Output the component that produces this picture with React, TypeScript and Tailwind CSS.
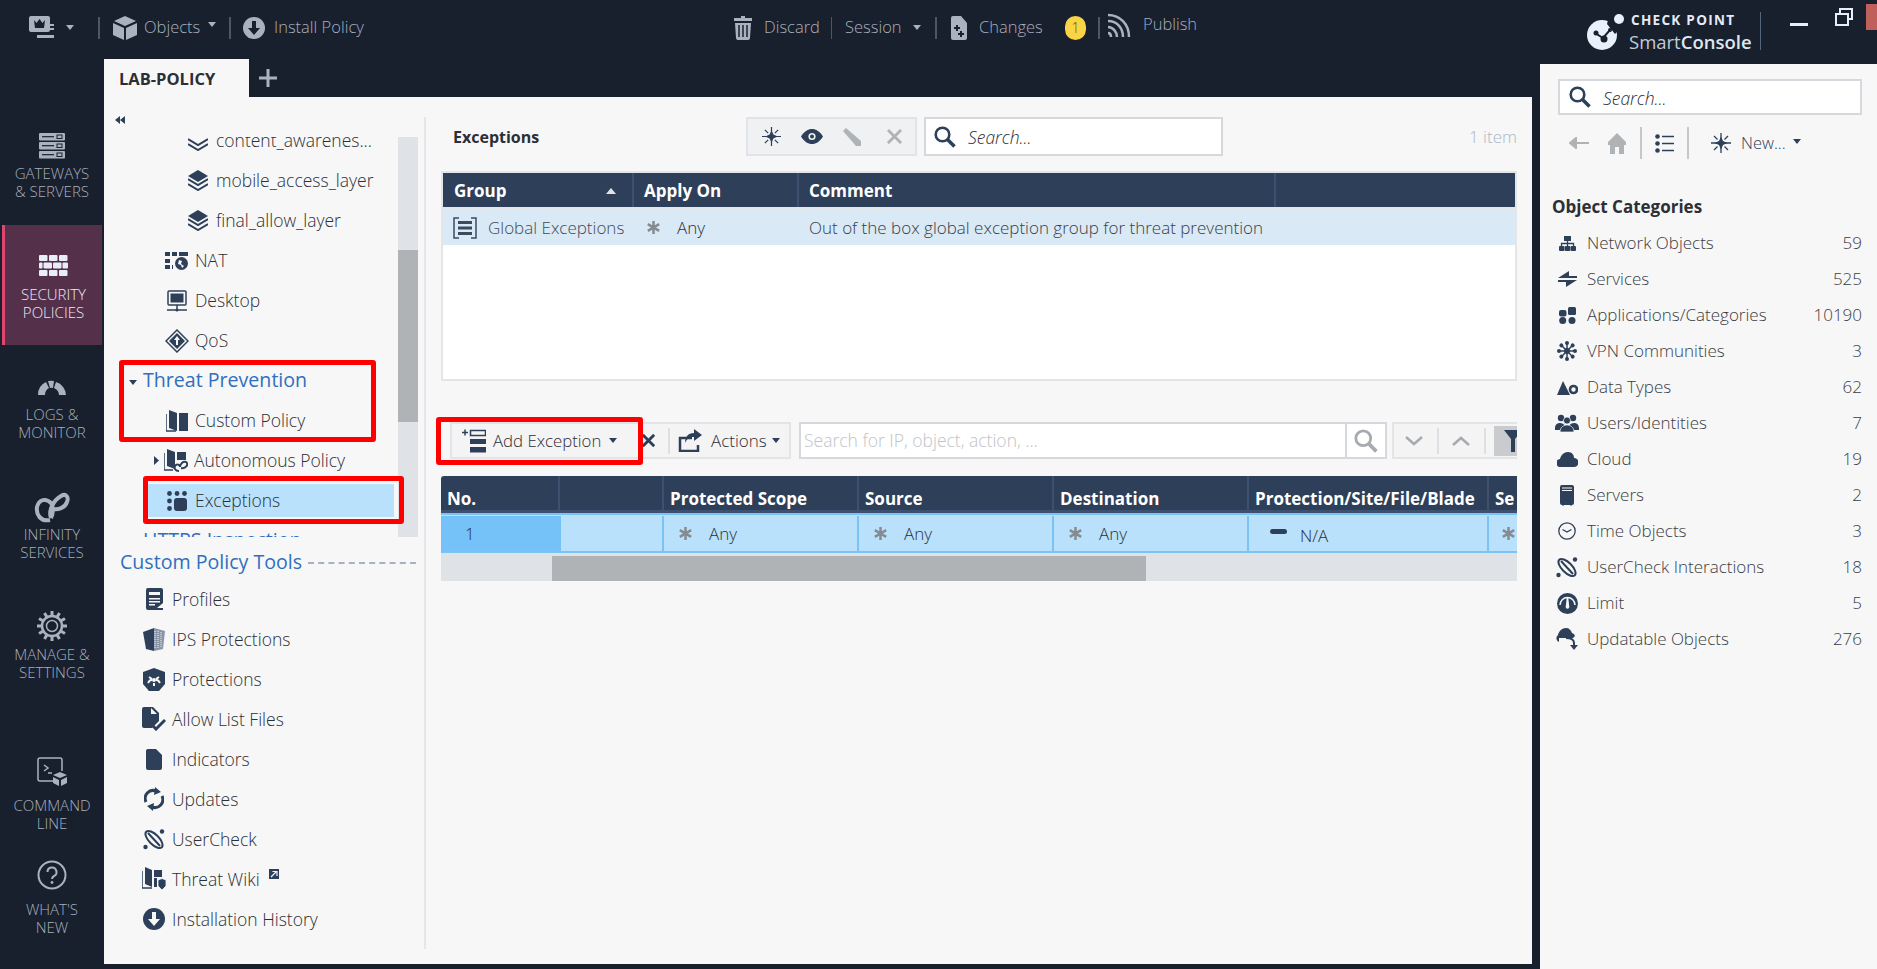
import React from "react";

const N = "#2e4059";
const G = "#aab2c0";

const Svg = ({ w, h, vb, children, cls }: { w: number; h: number; vb?: string; children: React.ReactNode; cls?: string }) => (
  <svg width={w} height={h} viewBox={vb ?? `0 0 ${w} ${h}`} className={"shrink-0 " + (cls ?? "")}>{children}</svg>
);

const Caret = ({ c = G, w = 8, cls = "" }: { c?: string; w?: number; cls?: string }) => (
  <Svg w={w} h={5} vb="0 0 8 5" cls={cls}><path d="M0 0h8L4 5z" fill={c} /></Svg>
);

const Sep = ({ cls }: { cls: string }) => <div className={"w-[2px] shrink-0 " + cls} />;

// top bar icons
const AppMenuIcon = () => (
  <Svg w={25} h={23}>
    <path d="M2 0h17a2 2 0 0 1 2 2v12a2 2 0 0 1-2 2H2a2 2 0 0 1-2-2V2a2 2 0 0 1 2-2z" fill={G} />
    <path d="M5 4l2.500 3L10.500 3l3 4L16 4l-1 8H6z" fill="#181f2d" />
    <path d="M18 8h7v2h-7zM18 12h7v2h-7zM8 19h17v3H8z" fill={G} />
  </Svg>
);
const CubeIcon = ({ s = 24, c = G }: { s?: number; c?: string }) => (
  <Svg w={s} h={s} vb="0 0 24 24">
    <path d="M12 0l11 5-11 5L1 5z" fill={c} />
    <path d="M0 7l11 5v12L0 19zM24 7l-11 5v12l11-5z" fill={c} />
  </Svg>
);
const DownCircle = ({ s = 22, c = G, bg = "#181f2d" }: { s?: number; c?: string; bg?: string }) => (
  <Svg w={s} h={s} vb="0 0 22 22">
    <circle cx="11" cy="11" r="11" fill={c} />
    <path d="M9 4h4v7h4l-6 7-6-7h4z" fill={bg} />
  </Svg>
);
const Trash = () => (
  <Svg w={20} h={24}>
    <path d="M8 0h4v2h7v3H1V2h7zM2 7h16l-1 15a2 2 0 0 1-2 2H5a2 2 0 0 1-2-2z" fill={G} />
    <path d="M6 9v12M10 9v12M14 9v12" stroke="#181f2d" strokeWidth="1.500" />
  </Svg>
);
const ChangesIcon = () => (
  <Svg w={16} h={24}>
    <path d="M2 0h8l6 7v15a2 2 0 0 1-2 2H2a2 2 0 0 1-2-2V2a2 2 0 0 1 2-2z" fill={G} />
    <path d="M5 9h2v2h2v2H7v2H5v-2H3v-2h2zM9 15h2v2h2v2h-2v2H9v-2H7v-2h2z" fill="#181f2d" />
  </Svg>
);
const PublishIcon = () => (
  <Svg w={25} h={25}>
    <path d="M1 2c12 0 21 9 21 22M1 8c9 0 15 7 15 16M1 14c5 0 9 5 9 10" stroke={G} strokeWidth="2.500" fill="none" />
    <path d="M1 20c2 0 3 2 3 4" stroke={G} strokeWidth="2.500" fill="none" />
  </Svg>
);

// sidebar icons
const GatewayIcon = () => (
  <Svg w={26} h={26}>
    {[0, 9, 18].map((y) => (
      <g key={y}>
        <rect x="0" y={y} width="26" height="7.500" rx="1" fill={G} />
        <path d={`M3 ${y + 3.7}h12`} stroke="#181f2d" strokeWidth="1.200" />
        <rect x="18" y={y + 2} width="5" height="3.500" fill="none" stroke="#181f2d" strokeWidth="1" />
      </g>
    ))}
  </Svg>
);
const WallIcon = () => (
  <Svg w={29} h={21}>
    {[0, 7.500, 15].map((y, i) => (
      <g key={y}>
        {(i === 1 ? [0, 4.500, 14, 23.500] : [0, 10, 20]).map((x, k) => (
          <rect key={x} x={x} y={y} width={i === 1 && (k === 0 || k === 3) ? (k === 0 ? 3.500 : 5.500) : 8.500} height="6" rx="1" fill="#e8edf7" />
        ))}
      </g>
    ))}
  </Svg>
);
const GaugeIcon = () => (
  <Svg w={32} h={18}>
    <path d="M2 17A14 14 0 0 1 10 4L13 10A8 8 0 0 0 9 17zM12 3a14 14 0 0 1 6 0l-1 7a8 8 0 0 0-3 0zM20 4A14 14 0 0 1 30 17h-7a8 8 0 0 0-5-7z" fill={G} />
  </Svg>
);
const InfinityIcon = () => (
  <Svg w={36} h={31}>
    <path d="M16 28C6 30 2 22 3 15 5 7 12 6 17 11c3 4 2 11 0 15M17 26C14 18 20 8 27 4c5-3 8 1 6 6-2 6-9 8-14 7" stroke={G} strokeWidth="4" fill="none" />
  </Svg>
);
const GearIcon = () => (
  <Svg w={30} h={30} vb="0 0 30 30">
    {Array.from({ length: 12 }).map((_, i) => (
      <rect key={i} x="13.500" y="0" width="3" height="5" fill={G} transform={`rotate(${i * 30} 15 15)`} />
    ))}
    <circle cx="15" cy="15" r="10" fill="none" stroke={G} strokeWidth="2.500" />
    <circle cx="15" cy="15" r="5.500" fill="none" stroke={G} strokeWidth="1.500" />
  </Svg>
);
const CommandIcon = () => (
  <Svg w={30} h={29}>
    <path d="M16 24H3a2 2 0 0 1-2-2V3a2 2 0 0 1 2-2h20a2 2 0 0 1 2 2v11" stroke={G} strokeWidth="1.500" fill="none" />
    <path d="M7 8l4 3-4 3M11 16h4" stroke={G} strokeWidth="1.500" fill="none" />
    <path d="M23 15l7 3-7 3-7-3zM16 20l6 3v6l-6-3zM30 20l-6 3v6l6-3z" fill={G} />
  </Svg>
);
const HelpIcon = () => (
  <Svg w={30} h={30}>
    <circle cx="15" cy="15" r="13.500" stroke={G} strokeWidth="2" fill="none" />
    <path d="M10.500 12a4.500 4.500 0 1 1 6.500 4c-1.500.8-2 1.500-2 3" stroke={G} strokeWidth="2" fill="none" />
    <circle cx="15" cy="22.500" r="1.400" fill={G} />
  </Svg>
);

// tree icons
const Layers = ({ top = true }: { top?: boolean }) => (
  <Svg w={20} h={21}>
    <path d={top ? "M10 0l10 6-10 6L0 6z" : "M1 2h18l-9 5z"} fill={N} />
    <path d="M0 9l10 6 10-6M0 14l10 6 10-6" stroke={N} strokeWidth="2" fill="none" />
  </Svg>
);
const NatIcon = () => (
  <Svg w={23} h={18}>
    <path d="M0 0h5v4H0zM7 0h5v4H7zM14 0h9v4h-9zM0 7h5v4H0zM0 13h5v4H0zM7 13h1v4H7z" fill={N} />
    <circle cx="16.500" cy="11.500" r="6.500" fill={N} />
    <path d="M14 8l3 1-1 3 3 2-2 2-1-3-3-1z" fill="#f7f7f7" />
  </Svg>
);
const DesktopIcon = () => (
  <Svg w={20} h={22}>
    <rect x="1" y="1" width="18" height="14" rx="1" fill="none" stroke={N} strokeWidth="1.500" />
    <rect x="3.500" y="3.500" width="13" height="9" fill={N} />
    <path d="M10 15v5M0 20h20" stroke={N} strokeWidth="1.500" />
    <circle cx="10" cy="20" r="1.500" fill={N} />
  </Svg>
);
const QosIcon = () => (
  <Svg w={24} h={24}>
    <path d="M12 1l11 11-11 11L1 12z" fill="none" stroke={N} strokeWidth="1.500" />
    <path d="M12 4l8 8-8 8-8-8z" fill={N} />
    <path d="M12 7l3 4h-2v5h-2v-5H9z" fill="#f7f7f7" />
  </Svg>
);
const BookIcon = () => (
  <Svg w={22} h={22}>
    <path d="M3 0l8 3v18l-8-3zM13 3h9v18h-9z" fill={N} />
    <path d="M0 4v17h10" stroke={N} strokeWidth="1.500" fill="none" />
  </Svg>
);
const AutoIcon = () => (
  <Svg w={24} h={24}>
    <path d="M3 0l8 3v17l-8-3zM13 3h9v8h-9z" fill={N} />
    <path d="M0 4v17h9" stroke={N} strokeWidth="1.500" fill="none" />
    <path d="M15 22c-4 0-5-3-4-5 2-3 5-1 5 1 0-3 3-6 6-5 3 2 0 7-5 6" stroke={N} strokeWidth="2" fill="#f7f7f7" />
  </Svg>
);
const ExcIcon = () => (
  <Svg w={20} h={20}>
    <circle cx="2.500" cy="2.500" r="2.400" fill={N} />
    <circle cx="10" cy="2.500" r="2.400" fill={N} />
    <circle cx="17.500" cy="2.500" r="2.400" fill={N} />
    <circle cx="2.500" cy="10" r="2.400" fill={N} />
    <circle cx="2.500" cy="17.500" r="2.400" fill={N} />
    <rect x="7" y="7" width="13" height="13" rx="3" fill={N} />
  </Svg>
);
const ProfileIcon = () => (
  <Svg w={17} h={22}>
    <path d="M2 0h13a2 2 0 0 1 2 2v20H2a2 2 0 0 1-2-2V2a2 2 0 0 1 2-2z" fill={N} />
    <path d="M3 4h11v3H3zM3 10h11v1.500H3zM3 13h11v1.500H3zM3 16h6v1.500H3z" fill="#f7f7f7" />
    <path d="M17 15v5h-6z" fill="#f7f7f7" />
  </Svg>
);
const IpsIcon = () => (
  <Svg w={22} h={23}>
    <path d="M0 4l11-4v23l-8-2z" fill={N} />
    <path d="M11 0l11 3-2 18-9 2z" fill="#8a96a8" />
    <path d="M12 3v18M15 3v17M18 4v15" stroke="#f7f7f7" strokeWidth="1" strokeDasharray="1 1" />
  </Svg>
);
const BioIcon = () => (
  <Svg w={22} h={23}>
    <path d="M11 0l11 4v12l-6 7H6l-6-7V4z" fill={N} />
    <circle cx="11" cy="12" r="2" fill="#f7f7f7" />
    <path d="M6 9l3 2M16 9l-3 2M11 15v3M5 15c2-3 2-3 4-3M17 15c-2-3-2-3-4-3" stroke="#f7f7f7" strokeWidth="2" fill="none" />
  </Svg>
);
const AllowIcon = () => (
  <Svg w={24} h={24}>
    <path d="M2 0h9l6 6v8l-7 7H2a2 2 0 0 1-2-2V2a2 2 0 0 1 2-2z" fill={N} />
    <path d="M9 1v6h6z" fill="#f7f7f7" />
    <path d="M9 17l5 5 9-9" stroke={N} strokeWidth="3" fill="none" />
  </Svg>
);
const DocIcon = () => (
  <Svg w={16} h={21}>
    <path d="M2 0h8l6 6v13a2 2 0 0 1-2 2H2a2 2 0 0 1-2-2V2a2 2 0 0 1 2-2z" fill={N} />
  </Svg>
);
const SyncIcon = () => (
  <Svg w={20} h={24}>
    <path d="M2 15a8 8 0 0 1 10-11M18 9a8 8 0 0 1-10 11" stroke={N} strokeWidth="3" fill="none" />
    <path d="M11 0l6 5-7 3zM9 24l-6-5 7-3z" fill={N} />
  </Svg>
);
const UserCheckIcon = () => (
  <Svg w={22} h={21}>
    <ellipse cx="11" cy="10.500" rx="5" ry="11" transform="rotate(-45 11 10.500)" fill="none" stroke={N} strokeWidth="2" />
    <path d="M5 4l12 13" stroke={N} strokeWidth="2" />
    <circle cx="19" cy="2.500" r="2.200" fill={N} />
    <circle cx="2.500" cy="18" r="2.200" fill={N} />
  </Svg>
);
const WikiIcon = () => (
  <Svg w={24} h={24}>
    <path d="M3 0l7 3v17l-7-3zM12 3h8v7h-8zM12 11h3v9h-3z" fill={N} />
    <path d="M0 4v17h10" stroke={N} strokeWidth="1.500" fill="none" />
    <path d="M16 13l4-1.500 4 1.500v6l-4 4-4-4z" fill={N} stroke="#f7f7f7" strokeWidth="0.800" />
  </Svg>
);
const ExtLink = () => (
  <Svg w={10} h={10} cls="-mt-[11px] ml-[9px]">
    <rect width="10" height="10" fill={N} />
    <path d="M2 8l5-5M3.500 2.500H8V7" stroke="#f7f7f7" strokeWidth="1.200" fill="none" />
  </Svg>
);

// content icons
const SearchIcon = ({ c = N, s = 22 }: { c?: string; s?: number }) => (
  <Svg w={s} h={s} vb="0 0 22 22">
    <circle cx="8.500" cy="8.500" r="6.800" fill="none" stroke={c} strokeWidth="2.600" />
    <path d="M13.500 13.500l7 7" stroke={c} strokeWidth="3.500" />
  </Svg>
);
const Star = ({ c = N, s = 20 }: { c?: string; s?: number }) => (
  <Svg w={s} h={s} vb="0 0 20 20">
    <path d="M10 0v6M10 14v6M0 10h6M14 10h6M3 3l3.500 3.500M13.500 13.500L17 17M17 3l-3.500 3.500M6.500 13.500L3 17" stroke={c} strokeWidth="1.300" />
    <path d="M10 3.500l2 4.500 4.500 2-4.500 2-2 4.500-2-4.500-4.500-2 4.500-2z" fill={c} />
  </Svg>
);
const Eye = () => (
  <Svg w={22} h={15}>
    <path d="M0 7.500C3 2.500 7 0 11 0s8 2.500 11 7.500C19 12.500 15 15 11 15S3 12.500 0 7.500z" fill={N} />
    <circle cx="11" cy="7.500" r="3.600" fill="#f0f1f3" />
    <circle cx="11" cy="7.500" r="2" fill={N} />
  </Svg>
);
const Pencil = () => (
  <Svg w={18} h={18}>
    <path d="M3 0l15 13v5h-5L0 3z" fill="#b0b3b6" />
  </Svg>
);
const XIcon = ({ c = "#b0b3b6", s = 16, w = 3 }: { c?: string; s?: number; w?: number }) => (
  <Svg w={s} h={s} vb="0 0 16 16"><path d="M1 1l14 14M15 1L1 15" stroke={c} strokeWidth={w} /></Svg>
);
const Asterisk = () => (
  <Svg w={13} h={13}>
    <path d="M6.500 0v13M.8 3.200l11.400 6.600M12.200 3.200L.8 9.800" stroke="#868b92" strokeWidth="2.500" />
  </Svg>
);
const GroupIcon = () => (
  <Svg w={24} h={22}>
    <path d="M6 1H1v20h5M18 1h5v20h-5" stroke="#3b4a60" strokeWidth="1.500" fill="none" />
    <path d="M5 4h14v3H5zM5 9.500h14v3H5zM5 15h14v3H5z" fill="#3b4a60" />
  </Svg>
);
const AddExcIcon = () => (
  <Svg w={24} h={24}>
    <path d="M0 3.500h6M3 .5v6" stroke={N} strokeWidth="1.500" />
    <rect x="8.500" y="1.500" width="15" height="5" fill="none" stroke={N} strokeWidth="1.500" />
    <rect x="8" y="10" width="16" height="5" fill={N} />
    <rect x="8" y="18" width="16" height="5.500" fill={N} />
  </Svg>
);
const ShareIcon = () => (
  <Svg w={24} h={23}>
    <path d="M14 9H2v13h18v-6" stroke={N} strokeWidth="2.500" fill="none" />
    <path d="M16 0l8 6-8 6V8c-5 0-7 2-9 6 0-6 3-10 9-10z" fill={N} />
  </Svg>
);
const Chevron = ({ up = false }: { up?: boolean }) => (
  <Svg w={18} h={10}>
    <path d={up ? "M1 9l8-7 8 7" : "M1 1l8 7 8-7"} stroke="#a7abb0" strokeWidth="2.500" fill="none" />
  </Svg>
);
const Funnel = () => (
  <Svg w={18} h={22}>
    <path d="M0 0h18L11 9v13H7V9z" fill={N} />
  </Svg>
);

// right panel icons
const NetIcon = () => (
  <Svg w={17} h={15}>
    <rect x="5" y="0" width="7" height="5" fill={N} />
    <path d="M8.500 5v5M2.500 10V7.500h12V10" stroke={N} strokeWidth="1.300" fill="none" />
    <rect x="0" y="10" width="5.500" height="5" rx="1" fill={N} />
    <rect x="5.750" y="10" width="5.500" height="5" rx="1" fill={N} />
    <rect x="11.500" y="10" width="5.500" height="5" rx="1" fill={N} />
  </Svg>
);
const ServicesIcon = () => (
  <Svg w={19} h={16}>
    <path d="M0 7L11 0v5h8v2zM19 9L8 16v-5H0V9z" fill={N} />
  </Svg>
);
const AppsIcon = () => (
  <Svg w={17} h={17}>
    <rect x="0" y="3" width="7.500" height="6.500" rx="2" fill={N} />
    <rect x="9" y="0" width="8" height="8" rx="1.500" fill={N} />
    <circle cx="3.700" cy="13.500" r="3.500" fill={N} />
    <circle cx="13" cy="13.500" r="3.500" fill={N} />
  </Svg>
);
const VpnIcon = () => (
  <Svg w={20} h={20}>
    {[0, 45, 90, 135, 180, 225, 270, 315].map((a) => (
      <g key={a} transform={`rotate(${a} 10 10)`}>
        <path d="M10 10V2" stroke={N} strokeWidth="1.500" />
        <circle cx="10" cy="2" r="2" fill={N} />
      </g>
    ))}
    <circle cx="10" cy="10" r="3" fill={N} />
  </Svg>
);
const DataIcon = () => (
  <Svg w={21} h={15}>
    <path d="M6 1l7 14H0z" fill={N} />
    <circle cx="16.500" cy="9.500" r="3.500" fill="none" stroke={N} strokeWidth="2.600" />
  </Svg>
);
const UsersIcon = () => (
  <Svg w={24} h={18}>
    <circle cx="6" cy="4" r="3.200" fill={N} />
    <circle cx="18" cy="4" r="3.200" fill={N} />
    <path d="M0 14c0-4 3-5 5-5s4 1 5 3l-3 4H0zM24 14c0-4-3-5-5-5s-4 1-5 3l3 4h7z" fill={N} />
    <circle cx="12" cy="6.500" r="3.500" fill={N} stroke="#f7f7f7" strokeWidth="0.700" />
    <path d="M5 18c0-5 4-7 7-7s7 2 7 7z" fill={N} stroke="#f7f7f7" strokeWidth="0.700" />
  </Svg>
);
const CloudIcon = ({ s = 21 }: { s?: number }) => (
  <Svg w={s} h={15} vb="0 0 21 15">
    <path d="M4 15a4 4 0 0 1-1-8c1-4 4-7 8-7 4 0 6 3 6 6a4.500 4.500 0 0 1 0 9z" fill={N} />
  </Svg>
);
const ServerIcon = () => (
  <Svg w={14} h={21}>
    <path d="M2 0h10a2 2 0 0 1 2 2v16a2 2 0 0 1-2 2H2a2 2 0 0 1-2-2V2a2 2 0 0 1 2-2z" fill={N} />
    <path d="M2 3h10M2 5.500h10" stroke="#f7f7f7" strokeWidth="1.200" />
    <path d="M2 21h2M10 21h2" stroke={N} strokeWidth="1" />
  </Svg>
);
const ClockIcon = () => (
  <Svg w={18} h={18}>
    <circle cx="9" cy="9" r="8.200" fill="none" stroke={N} strokeWidth="1.300" />
    <path d="M4.500 7.500L9 10l4.500-2.500" stroke={N} strokeWidth="1.300" fill="none" />
  </Svg>
);
const LimitIcon = () => (
  <Svg w={21} h={21}>
    <circle cx="10.500" cy="10.500" r="10.500" fill={N} />
    <path d="M3 12a7.500 7.500 0 0 1 15 0" stroke="#f7f7f7" strokeWidth="1.500" fill="none" />
    <path d="M9.700 5h1.600l1 9a1.800 1.800 0 1 1-3.600 0z" fill="#f7f7f7" />
  </Svg>
);
const UpdatableIcon = () => (
  <Svg w={24} h={22}>
    <path d="M4 14a4 4 0 0 1-1-7c1-4 4-7 8-7 3 0 5 2 6 5a4 4 0 0 1 3 3l-2 2H4z" fill={N} />
    <path d="M11 10c5 0 8 2 8 5v4" stroke={N} strokeWidth="2" fill="none" />
    <path d="M15 17h8l-4 5z" fill={N} />
  </Svg>
);

const BrandIcon = () => (
  <Svg w={38} h={36}>
    <circle cx="15" cy="21" r="15" fill="#e8f0fb" />
    <path d="M22 2l12 12 -6 6-8-10z" fill="#181f2d" />
    <circle cx="32" cy="5" r="5" fill="#e8f0fb" />
    <path d="M8 19l8 5 7-8" stroke="#181f2d" strokeWidth="2" fill="none" />
    <circle cx="9" cy="19" r="2.500" fill="#181f2d" />
    <circle cx="17" cy="25" r="3.500" fill="#181f2d" />
    <circle cx="23" cy="16" r="2" fill="#181f2d" />
  </Svg>
);
const Home = () => (
  <Svg w={18} h={21}>
    <path d="M9 0l9 9v3h-2v9H2v-9H0V9z" fill="#b0b3b6" />
    <path d="M7 14h4v7H7z" fill="#f7f7f7" />
  </Svg>
);
const BackArrow = () => (
  <Svg w={20} h={12}>
    <path d="M20 6H6M7 1L1 6l6 5z" stroke="#b0b3b6" strokeWidth="2" fill="#b0b3b6" />
  </Svg>
);
const ListIcon = () => (
  <Svg w={19} h={19}>
    <circle cx="2.500" cy="2.500" r="2.300" fill={N} />
    <circle cx="2.500" cy="9.500" r="2.300" fill={N} />
    <circle cx="2.500" cy="16.500" r="2.300" fill={N} />
    <path d="M7 2.500h12M7 9.500h12M7 16.500h12" stroke={N} strokeWidth="1.500" />
  </Svg>
);

const SideItem = ({ icon, l1, l2, cls, lbl, active }: { icon: React.ReactNode; l1: string; l2: string; cls: string; lbl: string; active?: boolean }) => (
  <div className={"flex flex-col items-center shrink-0 " + cls + (active ? " bg-[#55304a] border-l-[3px] border-[#e0456f] mx-[2px] text-[#e9edf5]" : " text-[#a7afbe]")}>
    <div className="flex justify-center items-center">{icon}</div>
    <div className={"text-[15px] leading-[18px] font-light text-center whitespace-nowrap " + lbl}>{l1}<br />{l2}</div>
  </div>
);

const TreeRow = ({ pl, icon, text, arrow }: { pl: number; icon: React.ReactNode; text: string; arrow?: boolean }) => (
  <div className="h-[40px] pt-[1px] flex items-center text-[17.500px] text-[#2c2f36] font-light whitespace-nowrap" style={{ paddingLeft: pl }}>
    {arrow && <Svg w={5} h={9} cls="-ml-[10px] mr-[5px]"><path d="M0 0l5 4.500L0 9z" fill={N} /></Svg>}
    <div className="w-[23px] flex justify-center shrink-0">{icon}</div>
    <span className="ml-[7px]">{text}</span>
  </div>
);

const ToolRow = ({ icon, text, extra }: { icon: React.ReactNode; text: string; extra?: React.ReactNode }) => (
  <div className="h-[40px] flex items-center text-[17.500px] text-[#2c2f36] font-light whitespace-nowrap">
    <div className="w-[24px] flex justify-center shrink-0">{icon}</div>
    <span className="ml-[6px]">{text}</span>
    {extra}
  </div>
);

const cats: [React.ReactNode, string, string][] = [
  [<NetIcon />, "Network Objects", "59"],
  [<ServicesIcon />, "Services", "525"],
  [<AppsIcon />, "Applications/Categories", "10190"],
  [<VpnIcon />, "VPN Communities", "3"],
  [<DataIcon />, "Data Types", "62"],
  [<UsersIcon />, "Users/Identities", "7"],
  [<CloudIcon />, "Cloud", "19"],
  [<ServerIcon />, "Servers", "2"],
  [<ClockIcon />, "Time Objects", "3"],
  [<UserCheckIcon />, "UserCheck Interactions", "18"],
  [<LimitIcon />, "Limit", "5"],
  [<UpdatableIcon />, "Updatable Objects", "276"],
];

const th = "h-full flex items-center text-white font-bold text-[17px] whitespace-nowrap overflow-hidden border-r-2 border-[#3d5070] shrink-0";
const td = "h-full flex items-center text-[17px] text-[#2c2f36] font-light whitespace-nowrap shrink-0";

export default function App() {
  return (
    <div className="relative w-[1877px] h-[969px] overflow-hidden bg-[#181f2d] flex" style={{ fontFamily: '"Open Sans", "Noto Sans", sans-serif' }}>
      {/* Left / centre */}
      <div className="w-[1532px] h-full flex flex-col shrink-0">
        {/* Top toolbar */}
        <div className="h-[59px] pb-[4px] flex items-center text-[#a7afbe] text-[16.500px] font-light shrink-0 whitespace-nowrap">
          <div className="ml-[29px]"><AppMenuIcon /></div>
          <Caret cls="ml-[12px]" />
          <Sep cls="h-[22px] bg-[#4d5666] ml-[24px]" />
          <div className="ml-[13px]"><CubeIcon /></div>
          <span className="ml-[7px] w-[60px]">Objects</span>
          <Caret cls="ml-[4px] -mt-[6px]" />
          <Sep cls="h-[22px] bg-[#4d5666] ml-[13px]" />
          <div className="ml-[12px]"><DownCircle /></div>
          <span className="ml-[9px] w-[92px]">Install Policy</span>
          <div className="ml-[367px]"><Trash /></div>
          <span className="ml-[11px] w-[54px]">Discard</span>
          <div className="w-px h-[22px] bg-[#4d5666] ml-[13px]" />
          <span className="ml-[13px] w-[54px]">Session</span>
          <Caret cls="ml-[14px]" />
          <Sep cls="h-[22px] bg-[#4d5666] ml-[14px]" />
          <div className="ml-[14px]"><ChangesIcon /></div>
          <span className="ml-[12px] w-[66px]">Changes</span>
          <div className="ml-[20px] w-[21px] h-[24px] rounded-full bg-[#fbd446] text-[#5b5020] text-[14px] flex items-center justify-center">1</div>
          <Sep cls="h-[22px] bg-[#4d5666] ml-[12px]" />
          <div className="ml-[7px] -mt-[4px]"><PublishIcon /></div>
          <span className="ml-[11px] -mt-[6px]">Publish</span>
        </div>

        {/* Sidebar + workspace */}
        <div className="flex-1 flex min-h-0">
          <div className="w-[104px] shrink-0 flex flex-col">
            <div className="h-[66px] shrink-0" />
            <SideItem cls="h-[100px] pt-[8px]" lbl="mt-[5px]" icon={<GatewayIcon />} l1="GATEWAYS" l2="& SERVERS" />
            <SideItem active cls="h-[120px] pt-[30px]" lbl="mt-[9px]" icon={<WallIcon />} l1="SECURITY" l2="POLICIES" />
            <SideItem cls="h-[120px] pt-[33px]" lbl="mt-[9px]" icon={<GaugeIcon />} l1="LOGS &" l2="MONITOR" />
            <SideItem cls="h-[120px] pt-[27px]" lbl="mt-[2px]" icon={<InfinityIcon />} l1="INFINITY" l2="SERVICES" />
            <SideItem cls="h-[146px] pt-[26px]" lbl="mt-[4px]" icon={<GearIcon />} l1="MANAGE &" l2="SETTINGS" />
            <SideItem cls="h-[103px] pt-[26px]" lbl="mt-[10px]" icon={<CommandIcon />} l1="COMMAND" l2="LINE" />
            <SideItem cls="h-[100px] pt-[26px]" lbl="mt-[10px]" icon={<HelpIcon />} l1="WHAT'S" l2="NEW" />
          </div>

          <div className="flex-1 flex flex-col min-w-0 mb-[5px]">
            {/* Tabs */}
            <div className="h-[38px] flex items-center shrink-0">
              <div className="w-[145px] h-full bg-[#f7f7f7] flex items-center pl-[15px] pt-[2px] text-[16.500px] font-bold text-[#2c2f36]">LAB-POLICY</div>
              <Svg w={18} h={18} cls="ml-[10px]"><path d="M9 0v18M0 9h18" stroke={G} strokeWidth="3" /></Svg>
            </div>

            <div className="flex-1 flex bg-[#f7f7f7] min-h-0">
              {/* Tree pane */}
              <div className="w-[322px] shrink-0 flex flex-col border-r-2 border-[#e4e6ea] mb-[15px] mt-[20px]">
                <div className="h-[20px] pl-[11px] shrink-0 flex">
                  <Svg w={10} h={8} cls="-mt-[1px]"><path d="M5 0v8L0 4zM10 0v8L5 4z" fill={N} /></Svg>
                </div>
                <div className="h-[400px] shrink-0 flex overflow-hidden">
                  <div className="w-[294px] shrink-0 overflow-hidden">
                    <div className="-mt-[17px]">
                      <TreeRow pl={82} icon={<Layers top={false} />} text="content_awarenes..." />
                      <TreeRow pl={82} icon={<Layers />} text="mobile_access_layer" />
                      <TreeRow pl={82} icon={<Layers />} text="final_allow_layer" />
                      <TreeRow pl={61} icon={<NatIcon />} text="NAT" />
                      <TreeRow pl={61} icon={<DesktopIcon />} text="Desktop" />
                      <TreeRow pl={61} icon={<QosIcon />} text="QoS" />
                      <div className="h-[40px] flex items-center pl-[25px] text-[19.600px] font-normal text-[#2f6fc0] whitespace-nowrap">
                        <Caret c={N} w={8} cls="mr-[6px] mt-[4px]" /><span>Threat Prevention</span>
                      </div>
                      <TreeRow pl={61} icon={<BookIcon />} text="Custom Policy" />
                      <TreeRow pl={60} arrow icon={<AutoIcon />} text="Autonomous Policy" />
                      <div className="ml-[44px] mr-[4px] bg-[#b9e1fc] h-[33px] mt-[4px] mb-[3px] flex items-center">
                        <div className="ml-[17px] w-[23px] flex justify-center shrink-0"><ExcIcon /></div>
                        <span className="ml-[7px] text-[17.500px] text-[#2c2f36] font-light">Exceptions</span>
                      </div>
                      <div className="h-[40px] flex items-center pl-[39px] text-[19.600px] text-[#2f6fc0] whitespace-nowrap">HTTPS Inspection</div>
                    </div>
                  </div>
                  <div className="w-[20px] bg-[#dfe2e7] flex flex-col shrink-0">
                    <div className="h-[113px] shrink-0" />
                    <div className="h-[172px] bg-[#b0b3b6] shrink-0" />
                  </div>
                </div>
                <div className="h-[50px] flex items-center pl-[16px] pr-[8px] shrink-0">
                  <span className="text-[19.600px] text-[#2f6fc0] whitespace-nowrap">Custom Policy Tools</span>
                  <div className="flex-1 ml-[6px] border-t-2 border-dashed border-[#a8b0c8] mt-[2px]" />
                </div>
                <div className="pl-[38px] -mt-[8px]">
                  <ToolRow icon={<ProfileIcon />} text="Profiles" />
                  <ToolRow icon={<IpsIcon />} text="IPS Protections" />
                  <ToolRow icon={<BioIcon />} text="Protections" />
                  <ToolRow icon={<AllowIcon />} text="Allow List Files" />
                  <ToolRow icon={<DocIcon />} text="Indicators" />
                  <ToolRow icon={<SyncIcon />} text="Updates" />
                  <ToolRow icon={<UserCheckIcon />} text="UserCheck" />
                  <ToolRow icon={<WikiIcon />} text="Threat Wiki" extra={<ExtLink />} />
                  <ToolRow icon={<DownCircle c={N} bg="#f7f7f7" />} text="Installation History" />
                </div>
              </div>

              {/* Content pane */}
              <div className="flex-1 min-w-0 pl-[15px] pr-[15px] pt-[20px] flex flex-col">
                {/* Exceptions header */}
                <div className="h-[39px] flex items-center shrink-0">
                  <span className="ml-[12px] w-[293px] text-[16px] font-bold text-[#2c2f36]">Exceptions</span>
                  <div className="w-[171px] h-full bg-[#f0f1f3] border-2 border-[#e0e3e7] flex items-center">
                    <div className="ml-[14px]"><Star s={19} /></div>
                    <div className="ml-[20px]"><Eye /></div>
                    <div className="ml-[20px]"><Pencil /></div>
                    <div className="ml-[26px]"><XIcon s={15} /></div>
                  </div>
                  <div className="w-[299px] h-full ml-[7px] bg-white border-2 border-[#d5d8dd] flex items-center pl-[8px]">
                    <SearchIcon />
                    <span className="ml-[12px] pt-[2px] italic font-light text-[17.500px] text-[#2c2f36]">Search...</span>
                  </div>
                  <span className="ml-auto text-[17px] font-light text-[#aeb6c6]">1 item</span>
                </div>
                {/* Table 1 */}
                <div className="mt-[15px] h-[210px] w-[1076px] bg-white border-2 border-[#e3e5e9] shrink-0 flex flex-col">
                  <div className="h-[34px] bg-[#2e4059] flex shrink-0">
                    <div className={th + " w-[191px] pl-[11px] justify-between pr-[16px] pt-[2px]"}>Group<Svg w={10} h={6}><path d="M5 0l5 6H0z" fill="#e0e3e7" /></Svg></div>
                    <div className={th + " w-[165px] pl-[10px] pt-[2px]"}>Apply On</div>
                    <div className={th + " w-[477px] pl-[10px] pt-[2px]"}>Comment</div>
                  </div>
                  <div className="h-[2px] bg-[#e3e5e9] shrink-0" />
                  <div className="h-[36px] pt-[1px] bg-[#d9e9f6] flex shrink-0">
                    <div className={td + " w-[191px] pl-[10px]"}><GroupIcon /><span className="ml-[11px] text-[#444a54]">Global Exceptions</span></div>
                    <div className={td + " w-[165px] pl-[13px]"}><Asterisk /><span className="ml-[17px]">Any</span></div>
                    <div className={td + " pl-[10px] text-[#3a3d44]"}>Out of the box global exception group for threat prevention</div>
                  </div>
                </div>
                {/* Lower toolbar */}
                <div className="mt-[41px] h-[37px] flex shrink-0 w-[1076px] overflow-hidden">
                  <div className="ml-[9px] w-[341px] h-full bg-[#f4f4f5] border-2 border-[#e2e4e8] flex items-center shrink-0">
                    <div className="ml-[10px]"><AddExcIcon /></div>
                    <span className="ml-[7px] w-[110px] text-[16.800px] font-light text-[#2c2f36] whitespace-nowrap">Add Exception</span>
                    <Caret c={N} cls="ml-[6px]" />
                    <div className="ml-[25px]"><XIcon c={N} s={13} w={3.500} /></div>
                    <div className="w-[2px] h-[26px] bg-[#dcdfe3] ml-[13px]" />
                    <div className="ml-[8px]"><ShareIcon /></div>
                    <span className="ml-[9px] w-[56px] text-[17px] font-light text-[#2c2f36]">Actions</span>
                    <Caret c={N} cls="ml-[5px]" />
                  </div>
                  <div className="ml-[8px] w-[588px] h-full bg-white border-2 border-[#d5d8dd] flex shrink-0">
                    <div className="flex-1 flex items-center pl-[3px] text-[17.500px] font-light text-[#c0c3c9] whitespace-nowrap border-r-2 border-[#d5d8dd]">Search for IP, object, action, ...</div>
                    <div className="w-[38px] flex items-center justify-center"><SearchIcon c="#a7abb0" s={24} /></div>
                  </div>
                  <div className="ml-[5px] flex-1 min-w-0 h-full bg-[#f4f4f5] border-y-2 border-l-2 border-[#e2e4e8] flex items-center">
                    <div className="ml-[11px]"><Chevron /></div>
                    <div className="w-[2px] h-[26px] bg-[#dcdfe3] ml-[14px]" />
                    <div className="ml-[13px]"><Chevron up /></div>
                    <div className="w-[2px] h-[26px] bg-[#dcdfe3] ml-[14px]" />
                    <div className="ml-[8px] flex-1 h-[30px] bg-[#c9cbce] flex items-center pl-[10px] overflow-hidden"><Funnel /></div>
                  </div>
                </div>
                {/* Table 2 */}
                <div className="mt-[17px] w-[1076px] flex flex-col shrink-0 overflow-hidden">
                  <div className="h-[34px] bg-[#2e4059] flex shrink-0 rounded-tl-[3px]">
                    <div className={th + " w-[119px] pl-[6px] pt-[12px]"}>No.</div>
                    <div className={th + " w-[104px]"} />
                    <div className={th + " w-[195px] pl-[6px] pt-[12px]"}>Protected Scope</div>
                    <div className={th + " w-[195px] pl-[6px] pt-[12px]"}>Source</div>
                    <div className={th + " w-[195px] pl-[6px] pt-[12px]"}>Destination</div>
                    <div className={th + " w-[240px] pl-[6px] pt-[12px]"}>Protection/Site/File/Blade</div>
                    <div className="h-full flex items-center text-white font-bold text-[17px] pl-[6px] pt-[12px] overflow-hidden">Se</div>
                  </div>
                  <div className="h-[3px] bg-[#3d5070] shrink-0" />
                  <div className="h-[40px] pt-[1px] bg-[#b9e1fc] border-y-2 border-[#7cc3f5] flex shrink-0 overflow-hidden">
                    <div className={td + " w-[120px] bg-[#74c2f7] pl-[24px]"}>1</div>
                    <div className={td + " w-[103px] border-r-2 border-[#7cc3f5]"} />
                    <div className={td + " w-[195px] pl-[15px] border-r-2 border-[#7cc3f5]"}><Asterisk /><span className="ml-[17px]">Any</span></div>
                    <div className={td + " w-[195px] pl-[15px] border-r-2 border-[#7cc3f5]"}><Asterisk /><span className="ml-[17px]">Any</span></div>
                    <div className={td + " w-[195px] pl-[15px] border-r-2 border-[#7cc3f5]"}><Asterisk /><span className="ml-[17px]">Any</span></div>
                    <div className={td + " w-[240px] pl-[21px] border-r-2 border-[#7cc3f5]"}>
                      <div className="w-[17px] h-[5px] rounded-full bg-[#2e4059] -mt-[4px]" />
                      <span className="ml-[13px] mt-[4px]">N/A</span>
                    </div>
                    <div className={td + " pl-[13px]"}><Asterisk /></div>
                  </div>
                  <div className="h-[28px] bg-[#dfe2e7] flex shrink-0 pt-[3px]">
                    <div className="ml-[111px] w-[594px] h-full bg-[#b0b3b6]" />
                  </div>
                </div>
              </div>
            </div>
          </div>
        </div>
      </div>

      {/* Right column */}
      <div className="w-[337px] ml-[8px] h-full flex flex-col shrink-0">
        <div className="h-[64px] flex shrink-0 items-start">
          <div className="ml-[47px] mt-[14px]"><BrandIcon /></div>
          <div className="ml-[6px] mt-[13px] w-[117px] flex flex-col whitespace-nowrap">
            <span className="text-[13.500px] leading-[15px] font-bold tracking-[1.300px] text-[#e4ebf5]">CHECK POINT</span>
            <span className="text-[18.500px] leading-[28px] -ml-[2px] text-[#c3ccd9]">Smart<span className="font-semibold text-[#dfe6f0]">Console</span></span>
          </div>
          <div className="w-px h-[38px] bg-[#54667f] ml-[12px] mt-[12px] shrink-0" />
          <div className="w-[18px] h-[3px] bg-[#e8effb] ml-[29px] mt-[23px] shrink-0" />
          <Svg w={18} h={18} cls="ml-[27px] mt-[8px]">
            <rect x="5" y="1" width="12" height="10" fill="none" stroke="#e8effb" strokeWidth="2" />
            <rect x="1" y="6" width="12" height="11" fill="#181f2d" stroke="#e8effb" strokeWidth="2" />
          </Svg>
          <div className="w-[12px] h-[26px] mt-[4px] ml-[13px] bg-[#c0605c] shrink-0" />
        </div>
        <div className="flex-1 bg-[#f7f7f7] flex flex-col px-[13px]">
          <div className="mt-[15px] ml-[5px] w-[304px] h-[36px] bg-white border-2 border-[#d5d8dd] flex items-center pl-[9px] shrink-0">
            <SearchIcon />
            <span className="ml-[12px] pt-[2px] italic font-light text-[17.500px] text-[#2c2f36]">Search...</span>
          </div>
          <div className="mt-[12px] h-[32px] flex items-center shrink-0">
            <div className="ml-[16px]"><BackArrow /></div>
            <div className="ml-[19px]"><Home /></div>
            <Sep cls="h-[32px] bg-[#c4c7cc] ml-[14px]" />
            <div className="ml-[13px]"><ListIcon /></div>
            <Sep cls="h-[32px] bg-[#c4c7cc] ml-[13px]" />
            <div className="ml-[22px]"><Star /></div>
            <span className="ml-[10px] text-[16.500px] font-light text-[#2e4059]">New...</span>
            <Caret c={N} cls="ml-[7px] -mt-[4px]" />
          </div>
          <div className="mt-[36px] text-[17px] font-bold text-[#2c2f36] leading-[24px] shrink-0 -ml-[1px]">Object Categories</div>
          <div className="mt-[6px] flex flex-col">
            {cats.map(([icon, label, n]) => (
              <div key={label} className="h-[36px] flex items-center text-[17px] font-light text-[#3a3d44]">
                <div className="w-[24px] ml-[2px] flex justify-center shrink-0">{icon}</div>
                <span className="ml-[8px] whitespace-nowrap">{label}</span>
                <span className="ml-auto mr-[2px]">{n}</span>
              </div>
            ))}
          </div>
        </div>
      </div>

      {/* Annotation rectangles */}
      <div className="absolute left-[119px] top-[360px] w-[257px] h-[82px] border-[5px] border-[#ff0000] rounded-[3px]" />
      <div className="absolute left-[143px] top-[476px] w-[261px] h-[48px] border-[5px] border-[#ff0000] rounded-[3px]" />
      <div className="absolute left-[436px] top-[417px] w-[207px] h-[48px] border-[5px] border-[#ff0000] rounded-[3px]" />
    </div>
  );
}
